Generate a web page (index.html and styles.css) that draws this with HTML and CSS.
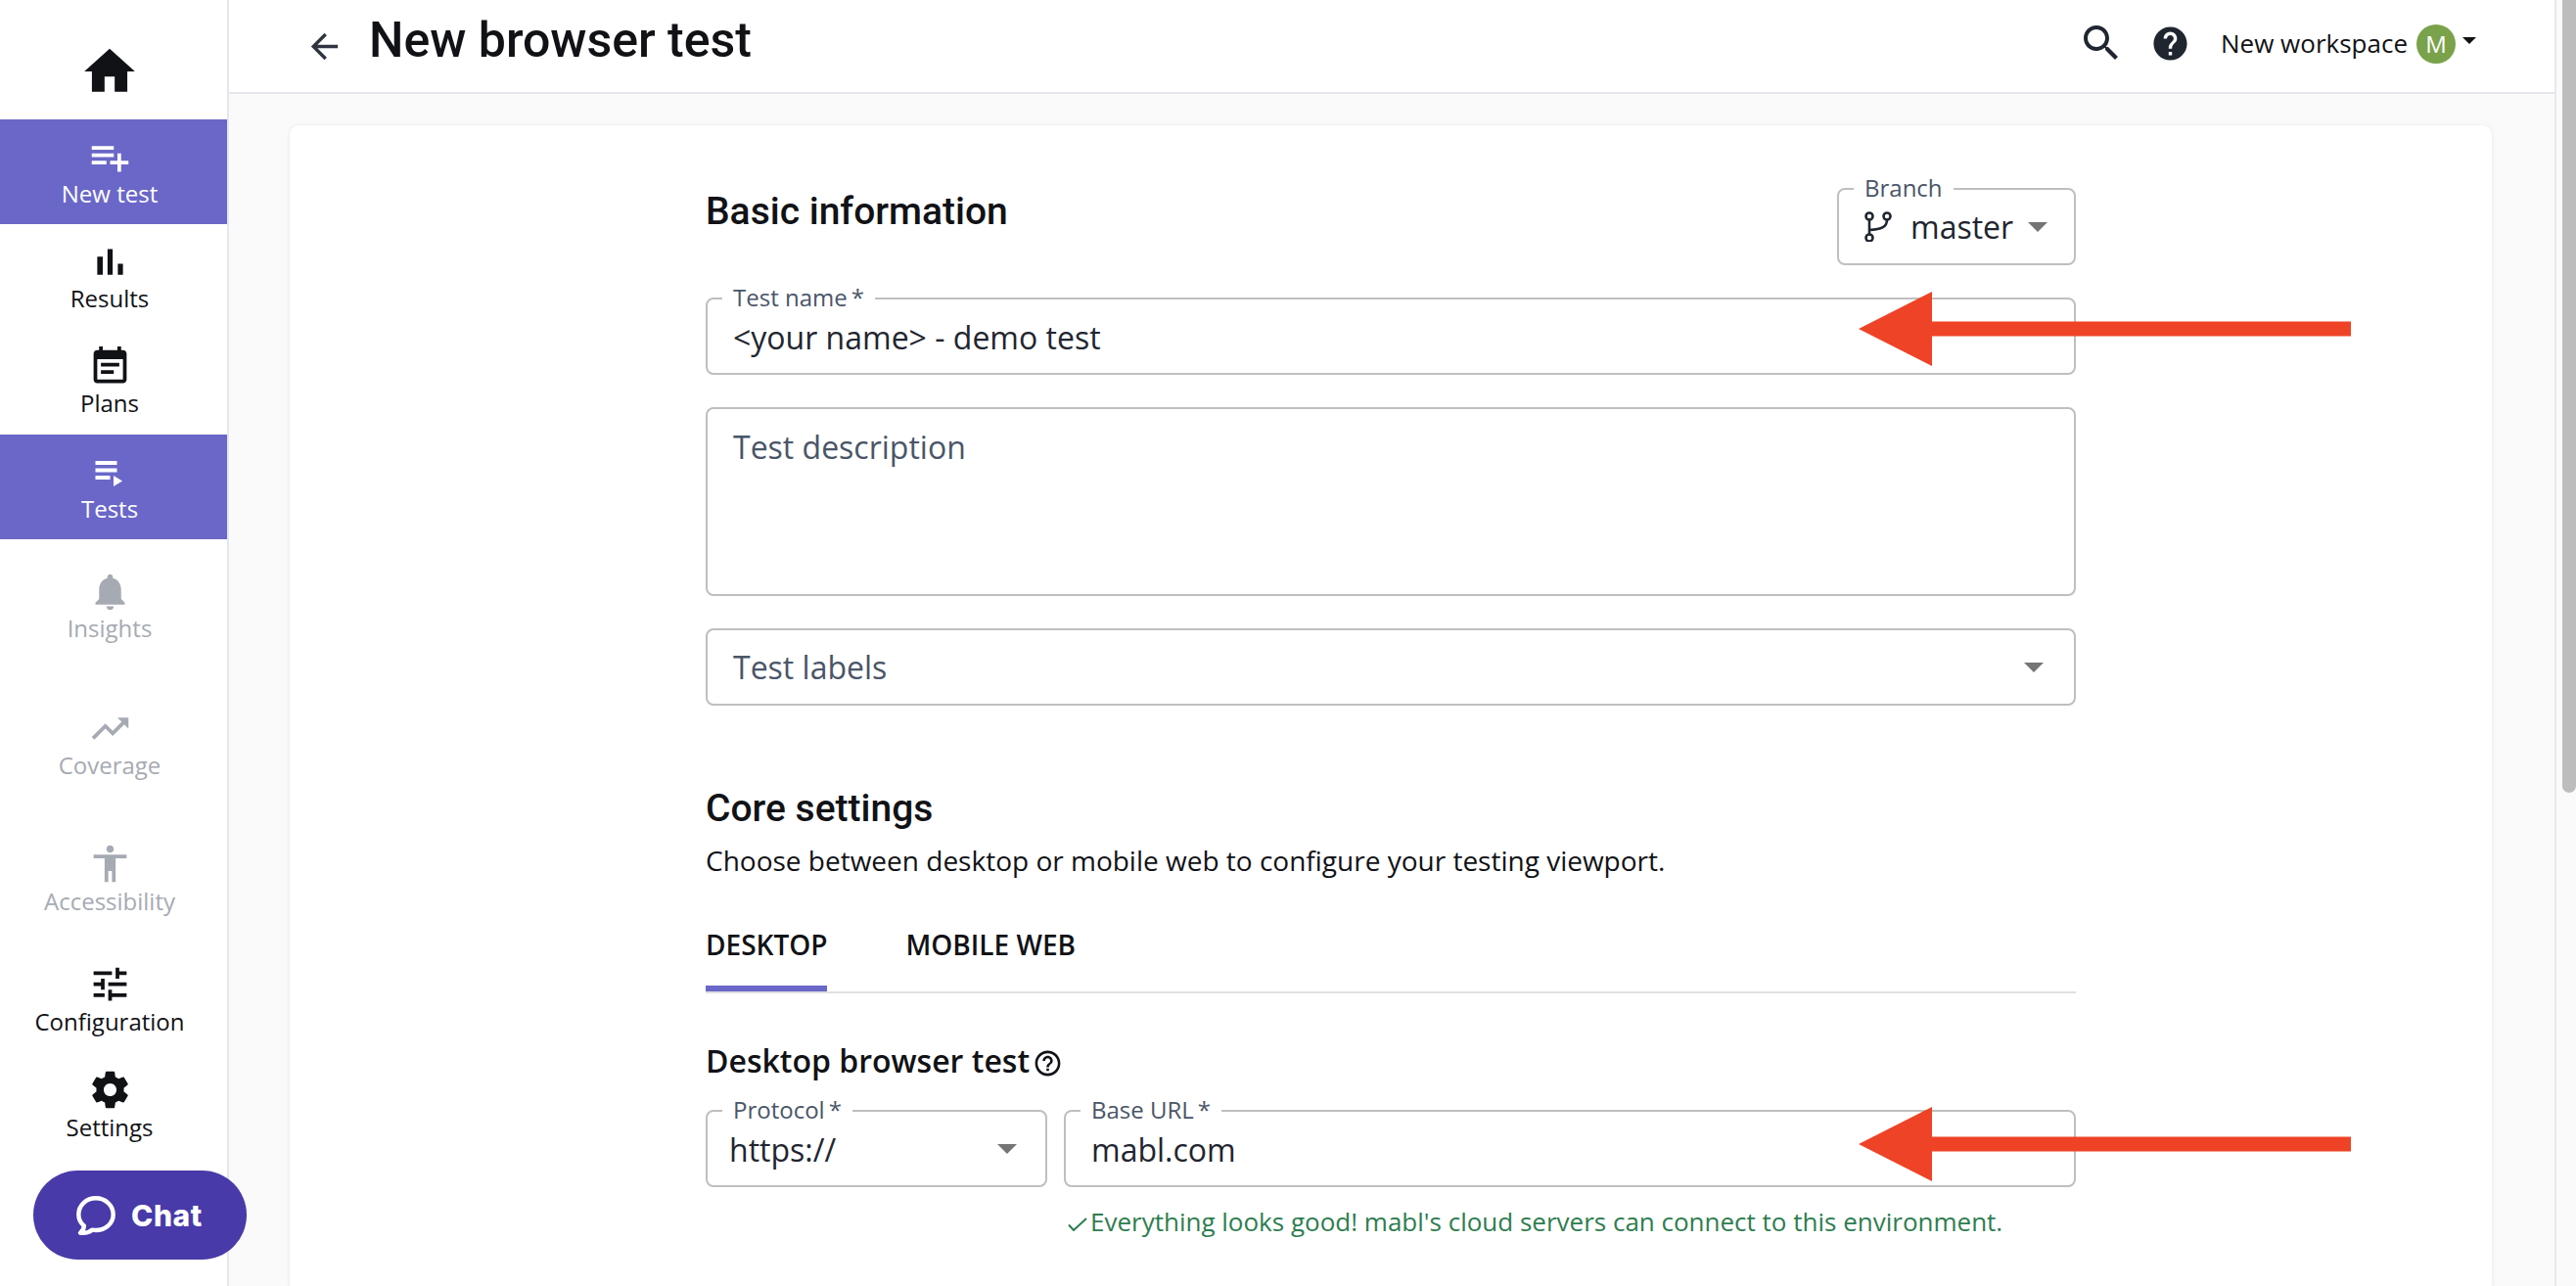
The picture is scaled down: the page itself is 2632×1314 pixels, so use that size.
FILE: index.html
```html
<!DOCTYPE html>
<html lang="en">
<head>
<meta charset="utf-8">
<title>New browser test</title>
<link rel="stylesheet" href="styles.css">
</head>
<body>
<div class="app">
  <aside class="sidebar">
    <a class="home"><svg class="icon-home" viewBox="0 0 24 24"><path d="M10 20v-6h4v6h5v-8h3L12 3 2 12h3v8z"/></svg></a>
    <a class="nav-item active"><svg class="icon" viewBox="0 0 24 24"><path d="M14 10H2v2h12v-2zm0-4H2v2h12V6zm4 8v-4h-2v4h-4v2h4v4h2v-4h4v-2h-4zM2 16h8v-2H2v2z"/></svg><span>New test</span></a>
    <a class="nav-item"><svg class="icon" viewBox="0 0 24 24"><path d="M5 9.2h3V19H5zM10.6 5h2.8v14h-2.8zm5.6 8H19v6h-2.8z"/></svg><span>Results</span></a>
    <a class="nav-item nav-tall"><svg class="icon" viewBox="0 0 24 24"><path d="M17 10H7v2h10v-2zm2-7h-1V1h-2v2H8V1H6v2H5c-1.11 0-1.99.9-1.99 2L3 19c0 1.1.89 2 2 2h14c1.1 0 2-.9 2-2V5c0-1.1-.9-2-2-2zm0 16H5V8h14v11zm-5-5H7v2h7v-2z"/></svg><span>Plans</span></a>
    <a class="nav-item active"><svg class="icon" viewBox="0 0 45 45"><path d="M7.500 11h22v4h-22zM7.500 18.500h22v4h-22zM7.500 26h15v4h-15zM26 26l9 5.500-9 5.500z"/></svg><span>Tests</span></a>
    <a class="nav-item muted gap-15"><svg class="icon" viewBox="0 0 24 24"><path d="M12 22c1.100 0 2-.9 2-2h-4c0 1.100.9 2 2 2zm6-6v-5c0-3.070-1.630-5.640-4.500-6.320V4c0-.83-.67-1.500-1.500-1.500s-1.500.67-1.500 1.500v.68C7.640 5.360 6 7.920 6 11v5l-2 2v1h16v-1l-2-2z"/></svg><span>Insights</span></a>
    <a class="nav-item muted gap-33"><svg class="icon" viewBox="0 0 24 24"><path d="M16 6l2.290 2.290-4.880 4.880-4-4L2 16.590 3.410 18l6-6 4 4 6.300-6.290L22 12V6z"/></svg><span>Coverage</span></a>
    <a class="nav-item muted gap-31 label-low"><svg class="icon" viewBox="0 0 24 24"><path d="M12 2c1.100 0 2 .9 2 2s-.9 2-2 2-2-.9-2-2 .9-2 2-2zm9 7h-6v13h-2v-6h-2v6H9V9H3V7h18v2z"/></svg><span>Accessibility</span></a>
    <a class="nav-item gap-16 label-low"><svg class="icon" viewBox="0 0 24 24"><path d="M3 17v2h6v-2H3zM3 5v2h10V5H3zm10 16v-2h8v-2h-8v-2h-2v6h2zM7 9v2H3v2h4v2h2V9H7zm14 4v-2H11v2h10zm-6-4h2V7h4V5h-4V3h-2v6z"/></svg><span>Configuration</span></a>
    <a class="nav-item gap-1 label-low"><svg class="icon" viewBox="0 0 24 24"><path d="M19.430 12.980c.04-.32.07-.64.07-.98s-.03-.66-.07-.98l2.110-1.650c.19-.15.24-.42.12-.64l-2-3.460c-.12-.22-.39-.3-.61-.22l-2.490 1c-.52-.4-1.080-.73-1.690-.98l-.38-2.650C14.460 2.180 14.250 2 14 2h-4c-.25 0-.46.18-.49.42l-.38 2.650c-.61.25-1.170.59-1.690.98l-2.490-1c-.23-.09-.49 0-.61.22l-2 3.460c-.13.22-.07.49.12.64l2.110 1.650c-.04.32-.07.65-.07.98s.03.66.07.98l-2.110 1.650c-.19.15-.24.42-.12.64l2 3.460c.12.22.39.3.61.22l2.490-1c.52.4 1.080.73 1.690.98l.38 2.650c.03.24.24.42.49.42h4c.25 0 .46-.18.49-.42l.38-2.650c.61-.25 1.170-.59 1.690-.98l2.490 1c.23.09.49 0 .61-.22l2-3.460c.12-.22.07-.49-.12-.64l-2.110-1.650zM12 15.500c-1.930 0-3.500-1.570-3.500-3.500s1.570-3.500 3.500-3.500 3.500 1.570 3.500 3.500-1.570 3.500-3.500 3.500z"/></svg><span>Settings</span></a>
  </aside>

  <div class="main">
    <header class="topbar">
      <svg class="back" viewBox="0 0 24 24"><path d="M20 11H7.830l5.590-5.590L12 4l-8 8 8 8 1.410-1.410L7.830 13H20v-2z"/></svg>
      <h1 class="title">New browser test</h1>
      <div class="top-actions">
        <svg class="top-search" viewBox="0 0 24 24"><path d="M15.500 14h-.79l-.28-.27C15.410 12.590 16 11.110 16 9.500 16 5.910 13.090 3 9.500 3S3 5.910 3 9.500 5.910 16 9.500 16c1.610 0 3.090-.59 4.230-1.570l.27.28v.79l5 4.990L20.490 19l-4.990-5zm-6 0C7.010 14 5 11.990 5 9.500S7.010 5 9.500 5 14 7.010 14 9.500 11.990 14 9.500 14z"/></svg>
        <svg class="top-help" viewBox="0 0 24 24"><path d="M12 2C6.480 2 2 6.480 2 12s4.480 10 10 10 10-4.480 10-10S17.520 2 12 2zm1 17h-2v-2h2v2zm2.070-7.750l-.9.92C13.450 12.900 13 13.500 13 15h-2v-.5c0-1.100.45-2.100 1.170-2.830l1.240-1.260c.37-.36.59-.86.59-1.410 0-1.100-.9-2-2-2s-2 .9-2 2H8c0-2.210 1.790-4 4-4s4 1.790 4 4c0 .88-.36 1.680-.93 2.250z"/></svg>
        <span class="workspace">New workspace</span>
        <span class="avatar">M</span>
        <span class="top-caret"></span>
      </div>
    </header>

    <div class="content">
      <section class="card">
        <div class="form">
          <div class="head-row">
            <h2 class="section-title">Basic information</h2>
            <div class="field branch">
              <span class="field-label">Branch</span>
              <svg class="branch-icon" viewBox="0 0 28 31"><circle cx="5" cy="5" r="3.500"/><circle cx="5" cy="27" r="3.500"/><circle cx="23" cy="5" r="3.500"/><path d="M5 8.500v15M23 8.500c0 7-5 10-18 10.500"/></svg>
              <span class="value">master</span>
              <span class="caret"></span>
            </div>
          </div>

          <div class="field name-field">
            <span class="field-label">Test name<i class="req">*</i></span>
            <span class="value">&lt;your name&gt; - demo test</span>
          </div>

          <div class="field area-field">
            <span class="placeholder">Test description</span>
          </div>

          <div class="field labels-field">
            <span class="placeholder">Test labels</span>
            <span class="caret"></span>
          </div>

          <h2 class="section-title core-title">Core settings</h2>
          <p class="core-sub">Choose between desktop or mobile web to configure your testing viewport.</p>

          <div class="tabs">
            <span class="tab tab-active">DESKTOP</span>
            <span class="tab">MOBILE WEB</span>
          </div>

          <h3 class="sub-title">Desktop browser test<svg class="sub-help" viewBox="0 0 24 24"><path d="M11 18h2v-2h-2v2zm1-16C6.480 2 2 6.480 2 12s4.480 10 10 10 10-4.480 10-10S17.520 2 12 2zm0 18c-4.410 0-8-3.590-8-8s3.590-8 8-8 8 3.590 8 8-3.590 8-8 8zm0-14c-2.210 0-4 1.790-4 4h2c0-1.100.9-2 2-2s2 .9 2 2c0 2-3 1.750-3 5h2c0-2.250 3-2.500 3-5 0-2.210-1.790-4-4-4z"/></svg></h3>

          <div class="url-row">
            <div class="field protocol">
              <span class="field-label">Protocol<i class="req">*</i></span>
              <span class="value">https://</span>
              <span class="caret"></span>
            </div>
            <div class="field base-url">
              <span class="field-label">Base URL<i class="req">*</i></span>
              <span class="value">mabl.com</span>
            </div>
          </div>

          <p class="status"><svg class="status-check" viewBox="0 0 20 14"><path d="M1 7.500l5 5.500L19 1"/></svg>Everything looks good! mabl's cloud servers can connect to this environment.</p>

          <svg class="arrow arrow-one" viewBox="0 0 503 76"><path d="M0 38L75 0v30.500h428v15H75V76z"/></svg>
          <svg class="arrow arrow-two" viewBox="0 0 503 76"><path d="M0 38L75 0v30.500h428v15H75V76z"/></svg>
        </div>
      </section>
    </div>
  </div>

  <div class="scrollbar"><div class="thumb"></div></div>

  <button class="chat"><svg class="chat-icon" viewBox="0 0 38 38"><path d="M19 3C10 3 3 9.500 3 18c0 4.500 2 8 5 10.500 0 2.500-1.500 5-3.500 6.500 4.500.5 9-.8 11-2.700 1 .2 2.300.3 3.500.3 9 0 16-6.500 16-14.600S28 3 19 3z"/></svg><span>Chat</span></button>
</div>
</body>
</html>
```
FILE: styles.css
```css
* { box-sizing: border-box; }
html, body { margin: 0; height: 100%; }
body {
  font-family: "Open Sans", "Liberation Sans", sans-serif;
  color: #111216;
  background: #fafafa;
  overflow: hidden;
}
.app { display: flex; height: 1314px; position: relative; }

/* sidebar */
.sidebar {
  width: 234px;
  flex: none;
  background: #fff;
  border-right: 2px solid #e6e6ee;
  display: flex;
  flex-direction: column;
  fill: #111216;
}
.home { height: 122px; padding: 42px 8px 0 0; display: flex; justify-content: center; align-items: flex-start; }
.icon-home { width: 62px; height: 62px; display: block; }
.nav-item {
  height: 107px;
  flex: none;
  padding: 16px 8px 0 0;
  display: flex;
  flex-direction: column;
  align-items: center;
  font-size: 24px;
  line-height: 32px;
}
.nav-item span { margin-top: -1px; }
.nav-item.label-low span { margin-top: 0; }
.nav-tall { height: 108px; }
.icon { width: 45px; height: 45px; display: block; flex: none; }
.nav-item.active { background: #6a67c8; color: #fff; fill: #fff; }
.nav-item.muted { color: #a6aab3; fill: #a6aab3; }
.gap-1 { margin-top: 1px; }
.gap-15 { margin-top: 15px; }
.gap-16 { margin-top: 16px; }
.gap-31 { margin-top: 31px; }
.gap-33 { margin-top: 33px; }

/* chat */
.chat {
  position: absolute;
  left: 34px;
  top: 1196px;
  width: 218px;
  height: 91px;
  border: 0;
  border-radius: 46px;
  background: #483aa8;
  color: #fff;
  display: flex;
  align-items: center;
  padding: 0 0 0 43px;
  gap: 15px;
  font-family: Inter, "Liberation Sans", sans-serif;
  font-weight: 800;
  font-size: 30px;
  letter-spacing: .6px;
}
.chat-icon { width: 42px; height: 42px; fill: none; stroke: #fff; stroke-width: 4; stroke-linejoin: round; flex: none; }

/* main */
.main { flex: 1; min-width: 0; display: flex; flex-direction: column; }
.topbar {
  height: 96px;
  flex: none;
  background: #fff;
  border-bottom: 2px solid #e6e6ee;
  display: flex;
  align-items: center;
  padding: 0 80px 0 77px;
}
.back { width: 41px; height: 41px; fill: #2e3440; flex: none; }
.title {
  margin: 0 0 12px 25px;
  font-family: Roboto, "Liberation Sans", sans-serif;
  font-weight: 500;
  font-size: 50px;
  line-height: 58px;
  color: #111216;
}
.top-actions { margin-left: auto; display: flex; align-items: center; margin-bottom: 6px; }
.top-search { width: 48px; height: 48px; fill: #1f2630; }
.top-help { width: 41px; height: 41px; fill: #1f2630; margin-left: 26px; }
.workspace { margin-left: 31px; font-size: 26px; line-height: 36px; color: #111216; }
.avatar {
  width: 40px;
  height: 40px;
  margin: 2px 0 0 9px;
  border-radius: 50%;
  background: #7aa24a;
  color: #fff;
  font-size: 24px;
  line-height: 40px;
  text-align: center;
}
.top-caret {
  margin: 0 0 6px 7px;
  border-left: 7px solid transparent;
  border-right: 7px solid transparent;
  border-top: 7px solid #111216;
}

/* content */
.content { flex: 1; min-height: 0; padding: 32px 64px 0 62px; display: flex; }
.card {
  flex: 1;
  background: #fff;
  border-radius: 10px 10px 0 0;
  box-shadow: 0 1px 5px rgba(0, 0, 0, .09);
  padding-top: 64px;
  display: flex;
  justify-content: center;
  overflow: hidden;
}
.form { width: 1400px; position: relative; }

.head-row { display: flex; justify-content: space-between; align-items: flex-start; }
.section-title {
  margin: 0;
  font-family: Roboto, "Liberation Sans", sans-serif;
  font-weight: 500;
  font-size: 39px;
  line-height: 44px;
  color: #111216;
}
.head-row .section-title { margin-top: 2px; }

.field {
  position: relative;
  border: 2px solid #bfbfbf;
  border-radius: 8px;
  background: #fff;
  display: flex;
  align-items: center;
  height: 79px;
  padding: 0 26px;
  font-size: 32px;
  color: #1f2630;
}
.field-label {
  position: absolute;
  top: -19px;
  left: 15px;
  padding: 0 11px;
  background: #fff;
  font-size: 24px;
  line-height: 34px;
  color: #4a5568;
  white-space: nowrap;
}
.req { font-style: normal; margin-left: 4px; }
.value { line-height: 42px; margin-top: 3px; }
.branch .value { margin-top: 1px; }
.placeholder { color: #4a5568; }
.caret {
  margin-left: auto;
  border-left: 10px solid transparent;
  border-right: 10px solid transparent;
  border-top: 10px solid #757575;
  flex: none;
}

.branch { width: 244px; padding: 0 27px 0 26px; }
.branch-icon { width: 28px; height: 31px; fill: none; stroke: #1f2630; stroke-width: 2.600; flex: none; margin: 0 19px 0 0; }

.name-field { margin-top: 33px; }
.area-field { margin-top: 33px; height: 193px; align-items: flex-start; padding-top: 17px; }
.labels-field { margin-top: 33px; }
.labels-field .caret { margin-right: 5px; }

.core-title { margin-top: 83px; }
.core-sub { margin: 11px 0 0; font-size: 28px; line-height: 40px; color: #111216; }

.tabs { margin-top: 37px; display: flex; gap: 80px; border-bottom: 2px solid #e0e0e0; height: 79px; }
.tab { font-size: 28px; font-weight: 600; line-height: 58px; height: 77px; color: #111216; }
.tab-active { border-bottom: 6px solid #6a67c8; }

.sub-title { margin: 49px 0 0; display: flex; align-items: center; font-size: 32px; font-weight: 600; line-height: 40px; color: #111216; }
.sub-help { width: 31px; height: 31px; fill: #111216; margin: 4px 0 0 3px; }

.url-row { margin-top: 30px; display: flex; gap: 17px; }
.protocol { width: 349px; padding: 0 29px 0 22px; }
.protocol .field-label { left: 15px; }
.base-url { flex: 1; padding-left: 26px; }
.base-url .field-label { left: 15px; }

.status { margin: 17px 0 0 370px; display: flex; align-items: center; font-size: 26px; line-height: 36px; color: #2e7d4f; white-space: nowrap; }
.status-check { width: 20px; height: 14px; fill: none; stroke: #2e7d4f; stroke-width: 2; margin: 6px 3px 0 0; flex: none; }

.arrow { position: absolute; left: 1178px; width: 503px; height: 76px; fill: #ee4326; }
.arrow-one { top: 106px; }
.arrow-two { top: 939px; }

/* scrollbar */
.scrollbar { width: 22px; flex: none; background: #fafafa; border-left: 2px solid #e8e8e8; padding-left: 6px; }
.thumb { height: 810px; background: #bdbdbd; border-radius: 0 0 7px 7px; }
```
